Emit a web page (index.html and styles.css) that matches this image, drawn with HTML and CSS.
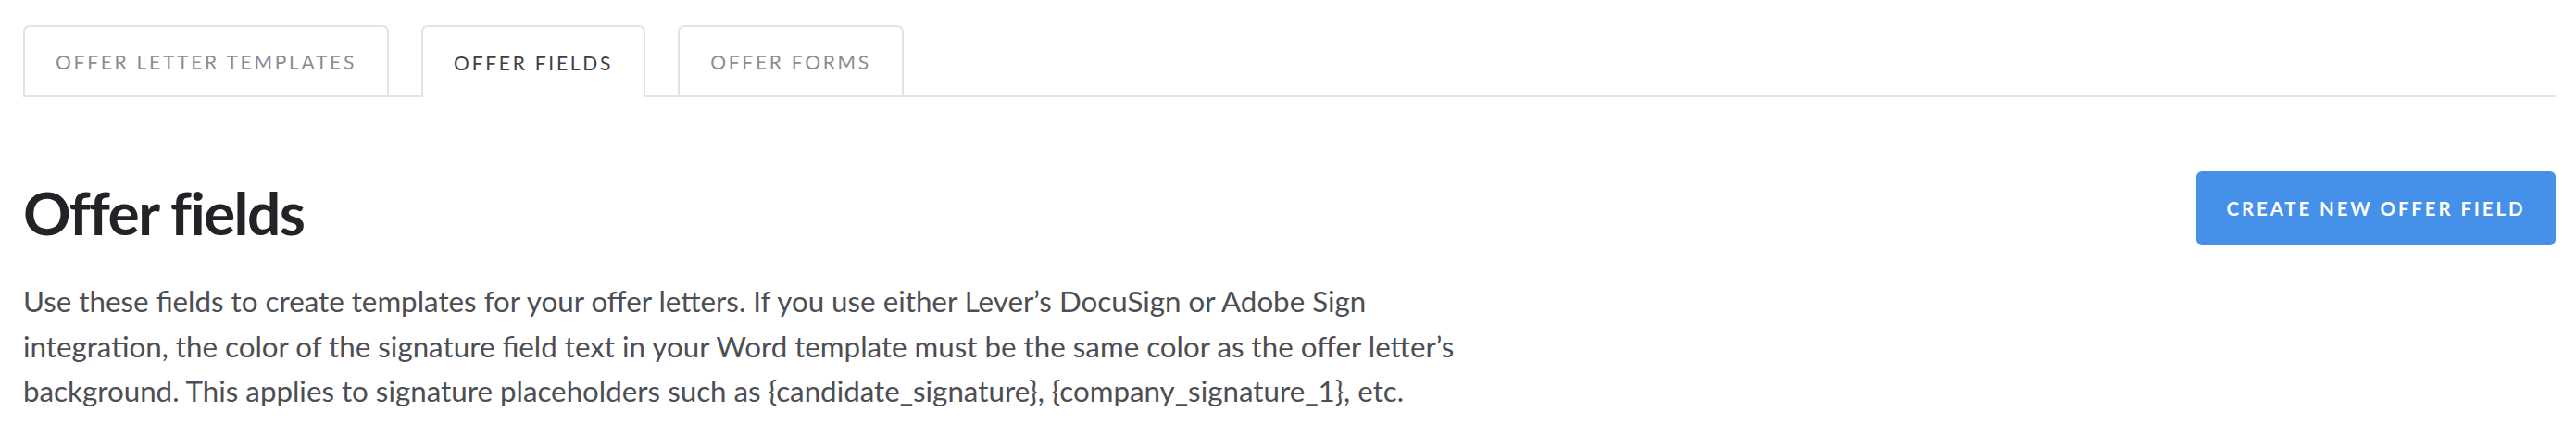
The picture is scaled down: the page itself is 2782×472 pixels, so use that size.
FILE: index.html
```html
<!DOCTYPE html>
<html lang="en">
<head>
<meta charset="utf-8">
<title>Offer fields</title>
<link rel="stylesheet" href="styles.css">
</head>
<body>
<div class="page">
  <nav class="tabs">
    <a class="tab">Offer letter templates</a>
    <a class="tab tab-active">Offer fields</a>
    <a class="tab">Offer forms</a>
  </nav>
  <section class="header">
    <div class="intro">
      <h1 class="title">Offer fields</h1>
      <p class="desc">Use these fields to create templates for your offer letters. If you use either Lever’s DocuSign or Adobe Sign<br>integration, the color of the signature field text in your Word template must be the same color as the offer letter’s<br>background. This applies to signature placeholders such as {candidate_signature}, {company_signature_1}, etc.</p>
    </div>
    <button class="btn-primary">Create new offer field</button>
  </section>
</div>
</body>
</html>
```
FILE: styles.css
```css
html, body {
  margin: 0;
  padding: 0;
  background: #ffffff;
}
body {
  font-family: Lato, "Open Sans", "Liberation Sans", sans-serif;
  color: #4a4b50;
}
.page {
  padding: 27px 22px 0 25px;
}
.tabs {
  display: flex;
  gap: 35px;
  border-bottom: 2px solid #e3e3e3;
}
.tab {
  display: flex;
  align-items: center;
  height: 74px;
  padding: 0 33px;
  border: 2px solid #e3e3e3;
  border-bottom: none;
  border-radius: 7px 7px 0 0;
  font-size: 21px;
  letter-spacing: 0.13em;
  text-transform: uppercase;
  color: #8c8c8e;
  background: #fff;
  cursor: pointer;
}
.tab-active {
  color: #3f4045;
  height: 76px;
  margin-bottom: -2px;
}
.header {
  display: flex;
  justify-content: space-between;
  align-items: flex-start;
  padding-top: 80px;
}
.title {
  margin: 0;
  font-size: 64px;
  line-height: 80px;
  font-weight: 700;
  letter-spacing: -1.6px;
  color: #222327;
  margin-top: 5px;
}
.desc {
  margin: 31px 0 0;
  font-size: 31.3px;
  line-height: 48.5px;
  color: #4d4e53;
}
.btn-primary {
  width: 388px;
  height: 80px;
  border: none;
  border-radius: 6px;
  background: #4590e9;
  color: #ffffff;
  font-family: Lato, "Open Sans", sans-serif;
  font-size: 20.5px;
  font-weight: 700;
  letter-spacing: 0.14em;
  text-transform: uppercase;
  cursor: pointer;
}
```
